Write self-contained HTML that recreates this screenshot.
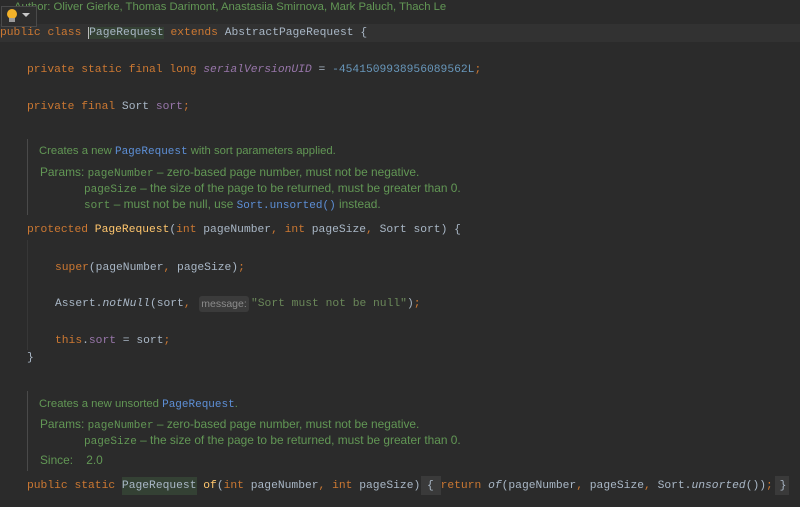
<!DOCTYPE html>
<html><head><meta charset="utf-8"><style>
html,body{margin:0;padding:0;background:#2b2b2b;width:800px;height:507px;overflow:hidden;position:relative}
.l{position:absolute;white-space:pre;font-family:"Liberation Mono",monospace;font-size:11.3px;line-height:16px;color:#a9b7c6}
.d{position:absolute;white-space:pre;font-family:"Liberation Sans",sans-serif;font-size:11.3px;line-height:16px;color:#629755}
.p{font-size:11.9px}
.d .m{font-family:"Liberation Mono",monospace;font-size:11px}
.k{color:#cc7832}.f{color:#9876aa}.n{color:#6897bb}.s{color:#6a8759}.me{color:#ffc66d}.lk{color:#5d8fd6}
.i{font-style:italic}
.hl{background:#344134}
.bar{position:absolute;left:27px;width:1px;background:#4a4a4a}
.guide{position:absolute;width:1px;background:#373737}
</style></head><body>
<div style="position:absolute;left:0;top:24px;width:800px;height:18px;background:#323232"></div>
<div class="d" style="left:14px;top:-1px;">Author: Oliver Gierke, Thomas Darimont, Anastasiia Smirnova, Mark Paluch, Thach Le</div>
<div style="position:absolute;left:1px;top:6px;width:34px;height:19px;border:1px solid #4a4a4a;background:#2e2e2e"></div>
<div style="position:absolute;left:7px;top:9px;width:10px;height:10px;border-radius:50%;background:#f3b229"></div>
<div style="position:absolute;left:9px;top:18px;width:6px;height:4px;background:#9a9a9a"></div>
<div style="position:absolute;left:22px;top:13px;width:0;height:0;border-left:4px solid transparent;border-right:4px solid transparent;border-top:4px solid #c8c8c8"></div>

<div class="l" style="left:0;top:25px"><span class="k">public class </span><span class="hl" style="border-left:1px solid #bbb">PageRequest</span><span class="k"> extends </span>AbstractPageRequest {</div>
<div class="l" style="left:27px;top:62px"><span class="k">private static final long </span><span class="f i">serialVersionUID</span> = <span class="n">-4541509938956089562L</span><span class="k">;</span></div>
<div class="l" style="left:27px;top:99px"><span class="k">private final </span>Sort <span class="f">sort</span><span class="k">;</span></div>

<div class="bar" style="top:139px;height:76px"></div>
<div class="d" style="left:39px;top:143px">Creates a new <span class="m lk">PageRequest</span> with sort parameters applied.</div>
<div class="d p" style="left:40px;top:164px">Params: <span class="m">pageNumber</span> – zero-based page number, must not be negative.</div>
<div class="d p" style="left:84px;top:180px"><span class="m">pageSize</span> – the size of the page to be returned, must be greater than 0.</div>
<div class="d p" style="left:84px;top:196px"><span class="m">sort</span> – must not be null, use <span class="m lk">Sort.unsorted()</span> instead.</div>

<div class="l" style="left:27px;top:222px"><span class="k">protected </span><span class="me">PageRequest</span>(<span class="k">int </span>pageNumber<span class="k">, int </span>pageSize<span class="k">, </span>Sort sort) {</div>
<div class="guide" style="left:27px;top:240px;height:110px"></div>
<div class="l" style="left:55px;top:260px"><span class="k">super</span>(pageNumber<span class="k">, </span>pageSize)<span class="k">;</span></div>
<div class="l" style="left:55px;top:296px">Assert.<span class="i">notNull</span>(sort<span class="k">, </span></div>
<div style="position:absolute;left:199px;top:296px;width:50px;height:16px;background:#3b3b3b;border-radius:3px;font-family:'Liberation Sans',sans-serif;font-size:10.5px;line-height:16px;color:#8c8c8c;text-align:center">message:</div>
<div class="l" style="left:251px;top:296px"><span class="s">"Sort must not be null"</span>)<span class="k">;</span></div>
<div class="l" style="left:55px;top:333px"><span class="k">this</span>.<span class="f">sort</span> = sort<span class="k">;</span></div>
<div class="l" style="left:27px;top:350px">}</div>

<div class="bar" style="top:391px;height:80px"></div>
<div class="d" style="left:39px;top:396px">Creates a new unsorted <span class="m lk">PageRequest</span>.</div>
<div class="d p" style="left:40px;top:416px">Params: <span class="m">pageNumber</span> – zero-based page number, must not be negative.</div>
<div class="d p" style="left:84px;top:432px"><span class="m">pageSize</span> – the size of the page to be returned, must be greater than 0.</div>
<div class="d p" style="left:40px;top:452px">Since:    2.0</div>

<div style="position:absolute;left:122px;top:477px;width:75px;height:18px;background:#344134"></div>
<div style="position:absolute;left:421px;top:476px;width:20px;height:19px;background:#3a3a3a"></div>
<div style="position:absolute;left:775px;top:476px;width:14px;height:19px;background:#3a3a3a"></div>
<div class="l" style="left:27px;top:478px"><span class="k">public static </span>PageRequest <span class="me">of</span>(<span class="k">int </span>pageNumber<span class="k">, int </span>pageSize) { <span class="k">return </span><span class="i">of</span>(pageNumber<span class="k">, </span>pageSize<span class="k">, </span>Sort.<span class="i">unsorted</span>())<span class="k">;</span> }</div>
</body></html>
